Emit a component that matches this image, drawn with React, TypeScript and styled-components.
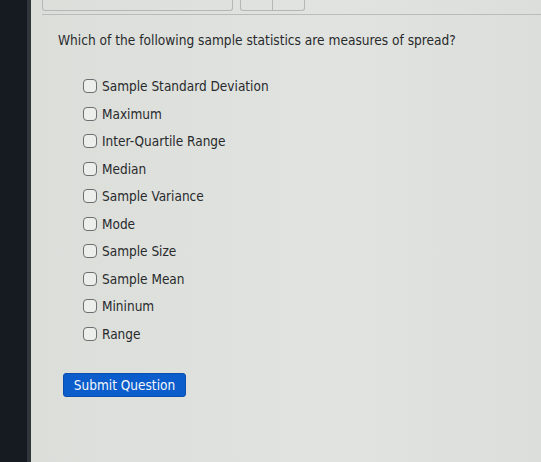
import * as React from "react";
import { styled, createGlobalStyle } from "styled-components";

const options = [
  "Sample Standard Deviation",
  "Maximum",
  "Inter-Quartile Range",
  "Median",
  "Sample Variance",
  "Mode",
  "Sample Size",
  "Sample Mean",
  "Mininum",
  "Range",
];

const App = () => {
  return (
    <>
      <GlobalStyle />
      <Page>
        <SideBar />
        <Content>
          <TopTabs>
            <TabBox />
            <SplitBox>
              <span />
              <span />
            </SplitBox>
          </TopTabs>
          <Question>Which of the following sample statistics are measures of spread?</Question>
          <OptionList>
            {options.map((o) => (
              <Option key={o}>
                <Box />
                <span>{o}</span>
              </Option>
            ))}
          </OptionList>
          <SubmitButton>Submit Question</SubmitButton>
        </Content>
      </Page>
    </>
  );
};

export default App;

const GlobalStyle = createGlobalStyle`
  html, body {
    margin: 0;
    padding: 0;
    background: #dfe1de;
  }
`;

const Page = styled.div`
  display: flex;
  width: 541px;
  height: 462px;
  overflow: hidden;
  font-family: "DejaVu Sans Condensed", "DejaVu Sans", sans-serif;
  color: #282a2c;
`;

const SideBar = styled.div`
  width: 27px;
  flex-shrink: 0;
  background: #151b20;
  border-right: 4px solid #30363a;
`;

const Content = styled.div`
  flex: 1;
  background: linear-gradient(90deg, #dcdeda 0%, #e1e3e0 60%, #dcdedb 100%);
  padding-left: 9px;
`;

const TopTabs = styled.div`
  display: flex;
  gap: 7px;
  margin-left: 2px;
  height: 13px;
  border-bottom: 1px solid #b9bcb9;
  padding-bottom: 1px;
`;

const TabBox = styled.div`
  width: 189px;
  height: 10px;
  border: 1px solid #b4b7b4;
  border-top: none;
  border-radius: 0 0 3px 3px;
`;

const SplitBox = styled.div`
  display: flex;
  width: 63px;
  height: 10px;
  border: 1px solid #b4b7b4;
  border-top: none;
  border-radius: 0 0 3px 3px;

  span {
    flex: 1;
  }
  span:first-child {
    border-right: 1px solid #b4b7b4;
  }
`;

const Question = styled.p`
  margin: 16px 0 0 18px;
  font-size: 13.6px;
  line-height: 18px;
`;

const OptionList = styled.div`
  display: flex;
  flex-direction: column;
  margin: 28px 0 0 43px;
  gap: 9.5px;
`;

const Option = styled.label`
  display: flex;
  align-items: center;
  gap: 5px;
  height: 18px;
  font-size: 13.5px;
`;

const Box = styled.span`
  box-sizing: border-box;
  width: 14px;
  height: 14px;
  border: 1.6px solid #6c6e6f;
  border-radius: 4px;
  background: #eceeec;
`;

const SubmitButton = styled.button`
  display: block;
  margin: 30px 0 0 23px;
  width: 123px;
  height: 24px;
  background: #0b5dcb;
  border: 1px solid #0a4fae;
  border-radius: 3px;
  color: #f4f7fb;
  font-family: "DejaVu Sans Condensed", "DejaVu Sans", sans-serif;
  font-size: 13.5px;
  padding: 0;
`;
